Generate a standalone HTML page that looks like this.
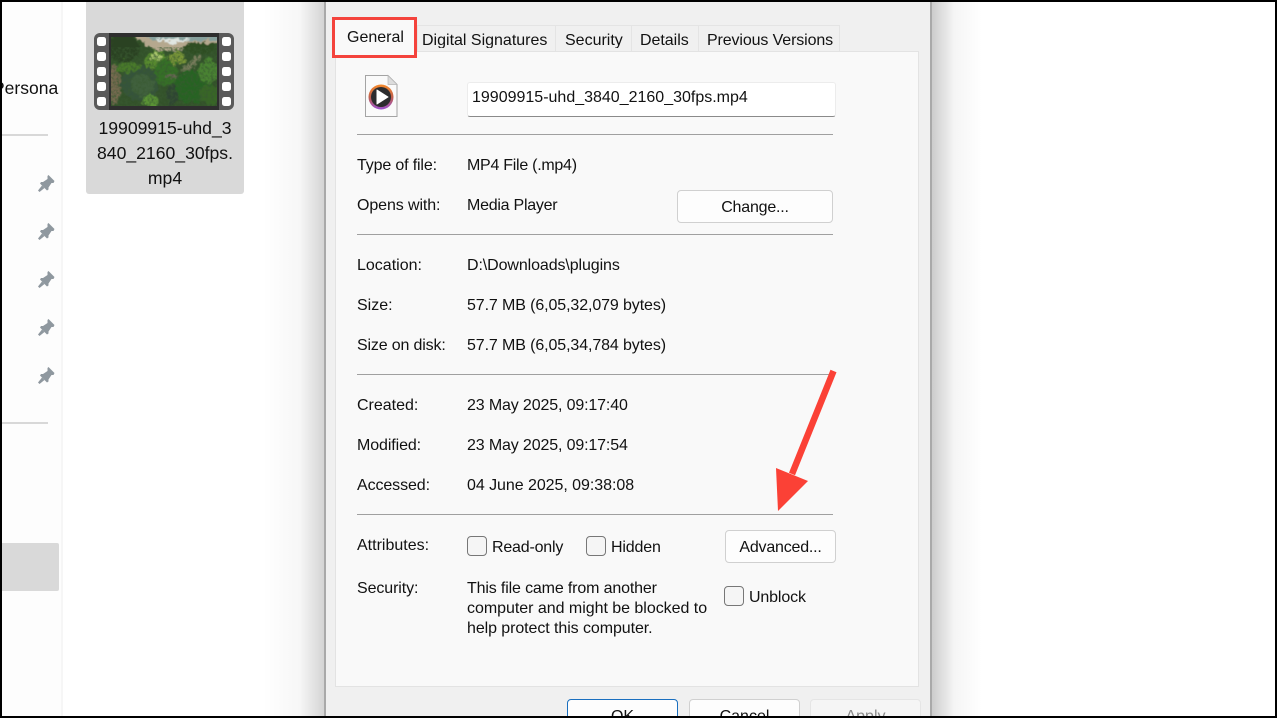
<!DOCTYPE html>
<html><head><meta charset="utf-8">
<style>
html,body{margin:0;padding:0;width:1277px;height:718px;overflow:hidden;background:#fff}
body{font-family:"Liberation Sans",sans-serif;font-size:16px;color:#111;position:relative}
.a{position:absolute;white-space:nowrap;line-height:20px}
.box{position:absolute;box-sizing:border-box}
.hr{position:absolute;left:357px;width:476px;height:1px;background:#a0a0a0}
.btn{position:absolute;box-sizing:border-box;background:#fdfdfd;border:1px solid #d0d0d0;border-radius:4px;text-align:center;line-height:33px}
.cb{position:absolute;box-sizing:border-box;width:20px;height:20px;background:#f5f5f5;border:1px solid #777;border-radius:4px}
.tab{position:absolute;top:25px;height:27px;box-sizing:border-box;background:#f0f0f0;border:1px solid #e4e4e4;border-bottom:0}
.t{position:absolute;top:31px;height:17px;overflow:hidden;white-space:nowrap;line-height:20px}
</style></head><body>

<!-- sidebar -->
<div class="box" style="left:2px;top:2px;width:59px;height:714px;background:#fdfdfd"></div>
<div class="box" style="left:61px;top:2px;width:2px;height:714px;background:#f6f6f6"></div>
<div class="box" style="left:2px;top:134px;width:46px;height:2px;background:#d8d8d8"></div>
<div class="box" style="left:2px;top:422px;width:46px;height:2px;background:#d8d8d8"></div>
<div class="box" style="left:2px;top:543px;width:57px;height:48px;background:#d9d9d9;border-radius:0 2px 2px 0"></div>
<div class="a" style="left:-7px;top:78px;font-size:17.5px">Persona</div>

<svg class="box" style="left:35px;top:173px" width="22" height="220" viewBox="0 0 22 220">
<defs><g id="p" fill="#8f989f"><path d="M13.5 2 L19.5 8 L18.5 10 L16.5 10 L13.5 14.5 L13.5 16.5 L12 17.5 L5 10.5 L6 9 L8 9 L12.5 6 L12.5 3Z"/><path d="M7 12.5 L9.5 15 L4.5 19 L3 17.5Z"/></g></defs>
<use href="#p" y="0"/><use href="#p" y="48"/><use href="#p" y="96"/><use href="#p" y="144"/><use href="#p" y="192"/>
</svg>

<!-- file tile -->
<div class="box" style="left:86px;top:2px;width:158px;height:192px;background:#d9d9d9;border-radius:0 0 3px 3px"></div>
<svg class="box" style="left:94px;top:33px" width="140" height="77" viewBox="0 0 140 77">
<defs>
<filter id="b" x="-10%" y="-10%" width="120%" height="120%"><feTurbulence type="fractalNoise" baseFrequency="0.22" numOctaves="2" seed="4" result="t"/><feDisplacementMap in="SourceGraphic" in2="t" scale="9" xChannelSelector="R" yChannelSelector="G"/><feGaussianBlur stdDeviation="0.5"/></filter>
<filter id="n" x="0" y="0" width="100%" height="100%"><feTurbulence type="fractalNoise" baseFrequency="0.35" numOctaves="2" seed="7"/><feColorMatrix type="matrix" values="0 0 0 0 0.04  0 0 0 0 0.1  0 0 0 0 0.03  1.8 0 0 0 -0.7"/></filter>
<clipPath id="c"><rect x="17" y="4" width="106" height="69"/></clipPath>
</defs>
<rect width="140" height="77" rx="6" fill="#5a5a5a"/>
<rect x="15" width="110" height="77" fill="#2e2e2e"/>
<g fill="#fff">
<rect x="3" y="4" width="9" height="9" rx="2.5"/><rect x="3" y="19" width="9" height="9" rx="2.5"/><rect x="3" y="34" width="9" height="9" rx="2.5"/><rect x="3" y="49" width="9" height="9" rx="2.5"/><rect x="3" y="64" width="9" height="9" rx="2.5"/>
<rect x="128" y="4" width="9" height="9" rx="2.5"/><rect x="128" y="19" width="9" height="9" rx="2.5"/><rect x="128" y="34" width="9" height="9" rx="2.5"/><rect x="128" y="49" width="9" height="9" rx="2.5"/><rect x="128" y="64" width="9" height="9" rx="2.5"/>
</g>
<g clip-path="url(#c)">
<rect x="17" y="4" width="106" height="69" fill="#33522a"/>
<g filter="url(#b)">
<path d="M38 0 L130 0 L130 9 L105 14 L80 18 L60 18 L50 10Z" fill="#b5a88e"/>
<path d="M44 0 L130 0 L130 7 L100 8 L78 9 L60 7Z" fill="#86a09c"/>
<path d="M60 5 L85 7 L98 6 L85 10 L70 9Z" fill="#e0e6e2"/>
<ellipse cx="30" cy="15" rx="16" ry="14" fill="#2a4220"/>
<ellipse cx="20" cy="52" rx="7" ry="20" fill="#75694f"/>
<ellipse cx="46" cy="50" rx="19" ry="18" fill="#36523a"/>
<ellipse cx="48" cy="52" rx="12" ry="11" fill="#41603c"/>
<ellipse cx="62" cy="27" rx="11" ry="9" fill="#56892e"/>
<ellipse cx="62" cy="23" rx="5" ry="4" fill="#a9c66c"/>
<ellipse cx="83" cy="25" rx="8" ry="7" fill="#7a9638"/>
<ellipse cx="72" cy="40" rx="12" ry="13" fill="#347028"/>
<ellipse cx="105" cy="15" rx="16" ry="6" fill="#2e4e20"/>
<path d="M86 38 L102 22 L108 24 L94 42Z" fill="#767a5a"/>
<rect x="72" y="42" width="18" height="3" fill="#686552"/>
<ellipse cx="98" cy="54" rx="19" ry="16" fill="#266424"/>
<ellipse cx="115" cy="38" rx="11" ry="12" fill="#4a8230"/>
<ellipse cx="116" cy="62" rx="10" ry="10" fill="#386628"/>
<ellipse cx="57" cy="68" rx="9" ry="6" fill="#5a9236"/>
<ellipse cx="78" cy="62" rx="6" ry="11" fill="#2f4530"/>
<ellipse cx="34" cy="34" rx="12" ry="6" fill="#487a2a"/>
</g>
<rect x="17" y="14" width="106" height="59" filter="url(#n)"/>
</g>
</svg>
<div class="box" style="left:86px;top:116px;width:158px;text-align:center;font-size:17.6px;line-height:25px">19909915-uhd_3<br>840_2160_30fps.<br>mp4</div>

<!-- dialog shadows -->
<div class="box" style="left:262px;top:2px;width:62px;height:714px;background:linear-gradient(to right,rgba(0,0,0,0),rgba(0,0,0,.03) 60%,rgba(0,0,0,.17))"></div>
<div class="box" style="left:932px;top:2px;width:50px;height:714px;background:linear-gradient(to left,rgba(0,0,0,0),rgba(0,0,0,.04) 55%,rgba(0,0,0,.2))"></div>

<!-- dialog -->
<div class="box" style="left:324px;top:2px;width:608px;height:714px;background:#f0f0f0;border-left:2px solid #a9a9a9;border-right:2px solid #a9a9a9"></div>

<!-- tabs -->
<div class="tab" style="left:417px;width:139px"></div>
<div class="tab" style="left:555px;width:77px"></div>
<div class="tab" style="left:631px;width:68px"></div>
<div class="tab" style="left:698px;width:142px"></div>
<div class="t" style="left:422px">Digital Signatures</div>
<div class="t" style="left:565px">Security</div>
<div class="t" style="left:640px;letter-spacing:-.03px">Details</div>
<div class="t" style="left:707px;letter-spacing:-.12px">Previous Versions</div>

<!-- panel -->
<div class="box" style="left:335px;top:51px;width:584px;height:636px;background:#f9f9f9;border:1px solid #e3e3e3"></div>
<div class="box" style="left:335px;top:20px;width:80px;height:36px;background:#f9f9f9"></div>
<div class="a" style="left:347px;top:28px">General</div>
<div class="box" style="left:332px;top:17px;width:85px;height:41px;border:3px solid #f4433c"></div>

<!-- doc icon -->
<svg class="box" style="left:364px;top:74px" width="34" height="44" viewBox="0 0 34 44">
<path d="M1.5 1.5 H24 L33 10.5 V42.5 H1.5Z" fill="#fafafa" stroke="#a4a4a4"/>
<path d="M24 1.5 V10.5 H33Z" fill="#dcdcdc" stroke="#b5b5b5" stroke-width=".7"/>
<defs><linearGradient id="g" x1="0" y1="0" x2="0" y2="1"><stop offset="0" stop-color="#f58a2c"/><stop offset=".5" stop-color="#c0604c"/><stop offset="1" stop-color="#9b52d0"/></linearGradient></defs>
<circle cx="17" cy="23" r="12.5" fill="url(#g)"/>
<circle cx="17" cy="23" r="10" fill="#2c2c2e"/>
<path d="M13 16 L24 23 L13 30Z" fill="#fff" stroke="#fff" stroke-linejoin="round"/>
</svg>

<!-- filename -->
<div class="box" style="left:467px;top:82px;width:369px;height:35px;background:#fff;border:1px solid #ececec;border-bottom:1px solid #8a8a8a;border-radius:3px"></div>
<div class="a" style="left:472px;top:88px">19909915-uhd_3840_2160_30fps.mp4</div>

<div class="hr" style="top:134px"></div>
<div class="hr" style="top:234px"></div>
<div class="hr" style="top:374px"></div>
<div class="hr" style="top:514px"></div>

<div class="a" style="left:357px;top:156px;letter-spacing:-.15px">Type of file:</div>
<div class="a" style="left:467px;top:156px;letter-spacing:-.27px">MP4 File (.mp4)</div>
<div class="a" style="left:357px;top:196px;letter-spacing:-.1px">Opens with:</div>
<div class="a" style="left:467px;top:196px;letter-spacing:-.25px">Media Player</div>
<div class="btn" style="left:677px;top:190px;width:156px;height:33px;letter-spacing:-.2px">Change...</div>

<div class="a" style="left:357px;top:256px">Location:</div>
<div class="a" style="left:467px;top:256px;letter-spacing:-.1px">D:\Downloads\plugins</div>
<div class="a" style="left:357px;top:296px">Size:</div>
<div class="a" style="left:467px;top:296px;letter-spacing:-.11px">57.7 MB (6,05,32,079 bytes)</div>
<div class="a" style="left:357px;top:336px;letter-spacing:-.16px">Size on disk:</div>
<div class="a" style="left:467px;top:336px;letter-spacing:-.11px">57.7 MB (6,05,34,784 bytes)</div>

<div class="a" style="left:357px;top:396px">Created:</div>
<div class="a" style="left:467px;top:396px;letter-spacing:-.14px">23 May 2025, 09:17:40</div>
<div class="a" style="left:357px;top:436px;letter-spacing:-.1px">Modified:</div>
<div class="a" style="left:467px;top:436px;letter-spacing:-.14px">23 May 2025, 09:17:54</div>
<div class="a" style="left:357px;top:476px;letter-spacing:-.1px">Accessed:</div>
<div class="a" style="left:467px;top:476px;letter-spacing:-.05px">04 June 2025, 09:38:08</div>

<div class="a" style="left:357px;top:536px">Attributes:</div>
<div class="cb" style="left:467px;top:536px"></div>
<div class="a" style="left:492px;top:538px;letter-spacing:-.2px">Read-only</div>
<div class="cb" style="left:586px;top:536px"></div>
<div class="a" style="left:611px;top:538px;letter-spacing:-.15px">Hidden</div>
<div class="btn" style="left:725px;top:530px;width:111px;height:33px;letter-spacing:-.2px">Advanced...</div>

<div class="a" style="left:357px;top:579px;letter-spacing:-.1px">Security:</div>
<div class="a" style="left:467px;top:579px;letter-spacing:-.15px">This file came from another</div>
<div class="a" style="left:467px;top:599px;letter-spacing:-.03px">computer and might be blocked to</div>
<div class="a" style="left:467px;top:619px;letter-spacing:-.08px">help protect this computer.</div>
<div class="cb" style="left:724px;top:586px"></div>
<div class="a" style="left:749px;top:588px;letter-spacing:-.14px">Unblock</div>

<!-- bottom buttons -->
<div class="btn" style="left:567px;top:699px;width:111px;height:33px;border:1px solid #1a6fbf;border-bottom:2px solid #1a6fbf">OK</div>
<div class="btn" style="left:689px;top:699px;width:111px;height:33px">Cancel</div>
<div class="btn" style="left:810px;top:699px;width:111px;height:33px;background:#f5f5f5;border-color:#e5e5e5;color:#8a8a8a">Apply</div>

<!-- arrow -->
<svg class="box" style="left:770px;top:365px" width="70" height="150" viewBox="770 365 70 150">
<path d="M833.5 371 L792 474" stroke="#fb4136" stroke-width="6.5" fill="none"/>
<path d="M776 468 L808 481 L778 511Z" fill="#fb4136"/>
</svg>

<!-- screenshot frame -->
<div class="box" style="left:0;top:0;width:1277px;height:718px;border:2px solid #000"></div>
</body></html>
